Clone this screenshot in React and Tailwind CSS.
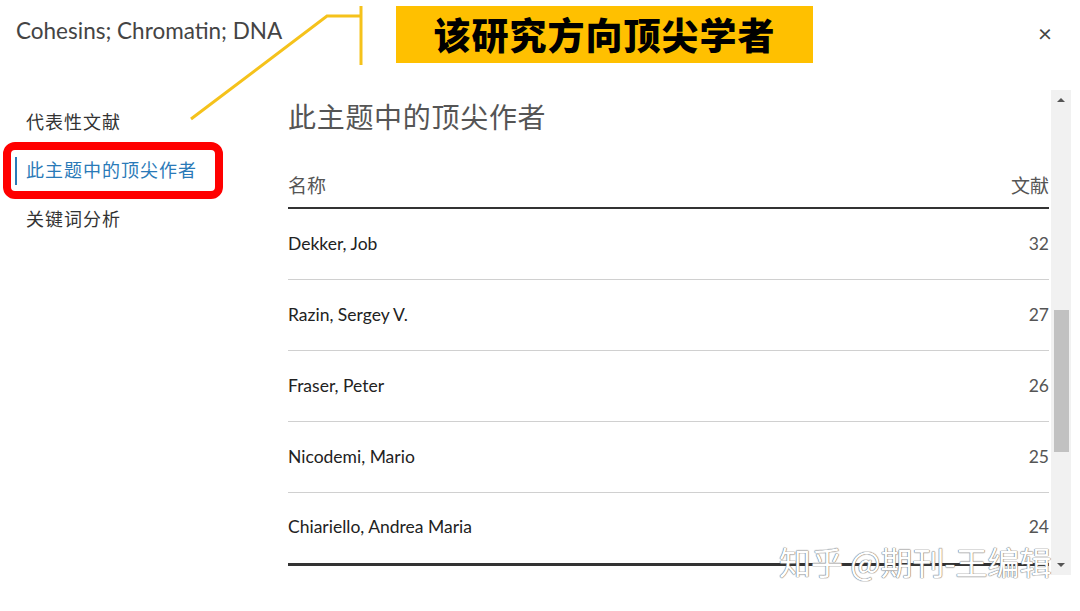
import React from "react";

const authors = [
  { name: "Dekker, Job", count: 32 },
  { name: "Razin, Sergey V.", count: 27 },
  { name: "Fraser, Peter", count: 26 },
  { name: "Nicodemi, Mario", count: 25 },
  { name: "Chiariello, Andrea Maria", count: 24 },
];

const font = { fontFamily: 'Lato, "Noto Sans CJK SC", sans-serif' };

const App = () => {
  return (
    <div className="relative w-[1080px] h-[611px] overflow-hidden bg-white text-[#333]" style={font}>
      {/* header */}
      <div className="flex items-center justify-between h-[62px] pl-[16px] pr-[28px]">
        <h1 className="text-[22.5px] text-[#444]">Cohesins; Chromatin; DNA</h1>
        <span className="text-[24px] text-[#444] leading-none mt-[4px]">×</span>
      </div>

      <div className="flex">
        {/* side nav */}
        <nav className="w-[288px] pt-[36px] flex flex-col text-[18px] tracking-[1px]">
          <div className="h-[48.5px] flex items-center pl-[26px] text-[#333]">代表性文献</div>
          <div className="h-[48.5px] flex items-center pl-[15px] text-[#2a7ab8]">
            <span className="w-[2px] h-[28px] bg-[#2a7ab8] mr-[9px]" />
            此主题中的顶尖作者
          </div>
          <div className="h-[48.5px] flex items-center pl-[26px] text-[#333]">关键词分析</div>
        </nav>

        {/* main */}
        <div className="flex-1 flex pt-[28px] pr-[9px]">
          <div className="flex-1 pt-[9px] mr-[2px]">
            <h2 className="text-[28px] leading-[36px] tracking-[0.7px] text-[#555]">此主题中的顶尖作者</h2>
            <div className="flex items-end justify-between h-[74px] pb-[7px] border-b-2 border-[#333] text-[19px] text-[#555]">
              <span>名称</span>
              <span>文献</span>
            </div>
            {authors.map((a, i) => (
              <div
                key={a.name}
                className={
                  i === authors.length - 1
                    ? "flex items-center justify-between h-[73px] pb-[2px] border-b-[3px] border-[#333] text-[17.5px]"
                    : "flex items-center justify-between h-[71px] border-b border-[#d0d0d0] text-[17.5px]"
                }
              >
                <span className="text-[#222]">{a.name}</span>
                <span className="text-[#555]">{a.count}</span>
              </div>
            ))}
          </div>
          {/* scrollbar */}
          <div className="w-[20px] h-[485px] bg-[#f1f1f1] flex flex-col items-center">
            <div className="h-[20px] flex items-center justify-center">
              <span className="w-0 h-0 border-x-[4px] border-x-transparent border-b-[4px] border-b-[#555]" />
            </div>
            <div className="h-[200px]" />
            <div className="w-[15px] h-[142px] bg-[#c1c1c1]" />
            <div className="flex-1" />
            <div className="h-[20px] flex items-center justify-center">
              <span className="w-0 h-0 border-x-[4px] border-x-transparent border-t-[4px] border-t-[#555]" />
            </div>
          </div>
        </div>
      </div>

      {/* annotation: yellow label + leader line */}
      <div className="absolute left-[396px] top-[6px] w-[417px] h-[57px] bg-[#FFC000] flex items-center justify-center">
        <span className="text-[37px] font-black text-black tracking-[1px]" style={{ fontFamily: '"Noto Sans CJK SC", sans-serif' }}>
          该研究方向顶尖学者
        </span>
      </div>
      <svg className="absolute left-0 top-0" width="400" height="130" viewBox="0 0 400 130">
        <polyline points="191,119 327,16 361,16" fill="none" stroke="#F5C21B" strokeWidth="3" />
        <line x1="361" y1="6" x2="361" y2="65" stroke="#F5C21B" strokeWidth="3" />
      </svg>

      {/* red highlight */}
      <div className="absolute left-[3px] top-[142px] w-[220px] h-[57px] border-[8px] border-[#ff0000] rounded-[12px]" />

      {/* watermark */}
      <div
        className="absolute left-[779px] top-[537px] text-[32px] text-white whitespace-nowrap"
        style={{ fontFamily: '"Noto Sans CJK SC", sans-serif', textShadow: "0 0 1px #777, 0 0 1px #777, 0 0 1px #777" }}
      >
        知乎 @期刊-王编辑
      </div>
    </div>
  );
};

export default App;
